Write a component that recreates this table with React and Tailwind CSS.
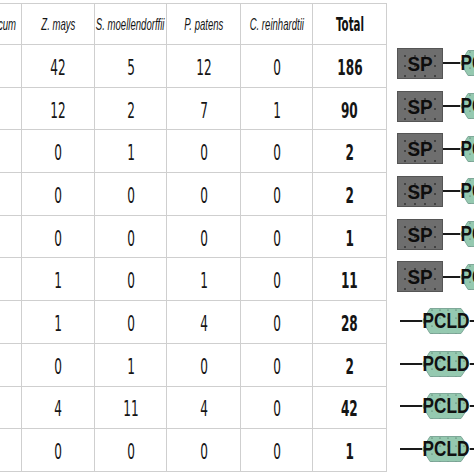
const header = ["S. lycopersicum", "Z. mays", "S. moellendorffii", "P. patens", "C. reinhardtii"];

const rows = [
  [0, 42, 5, 12, 0, 186],
  [0, 12, 2, 7, 1, 90],
  [0, 0, 1, 0, 0, 2],
  [0, 0, 0, 0, 0, 2],
  [0, 0, 0, 0, 0, 1],
  [0, 1, 0, 1, 0, 11],
  [0, 1, 0, 4, 0, 28],
  [0, 0, 1, 0, 0, 2],
  [0, 4, 11, 4, 0, 42],
  [0, 0, 0, 0, 0, 1],
];

const domains = ["sp", "sp", "sp", "sp", "sp", "sp", "pcld", "pcld", "pcld", "pcld"];

const cell = "flex items-center justify-center border-r border-b border-[#cfcfcf]";

const Hexagon = () => (
  <div className="relative w-[48px] h-[26px] shrink-0 flex items-center justify-center">
    <svg className="absolute inset-0" width="48" height="26" viewBox="0 0 48 26">
      <defs>
        <pattern id="dots" width="8" height="8" patternUnits="userSpaceOnUse">
          <circle cx="2" cy="2" r="0.6" fill="#3b5a4a" />
        </pattern>
      </defs>
      <polygon points="0.5,13 8,0.5 39,0.5 47.5,13 39,25.5 8,25.5" fill="#95c9b0" stroke="#7fa899" strokeWidth="1" />
      <polygon points="0.5,13 8,0.5 39,0.5 47.5,13 39,25.5 8,25.5" fill="url(#dots)" />
    </svg>
    <span className="relative shrink-0 font-['Liberation_Sans',sans-serif] font-bold text-[22px] leading-none text-[#111] inline-block scale-x-[0.78]">
      PCLD
    </span>
  </div>
);

const SpBox = () => (
  <div className="w-[46px] h-[31px] shrink-0 flex items-center justify-center bg-[#6e6e6e] border border-[#555] bg-[radial-gradient(#2a2a2a_0.6px,transparent_0.9px)] bg-[length:10px_10px] bg-[position:2px_2px]">
    <span className="shrink-0 font-['Liberation_Sans',sans-serif] font-bold text-[21px] leading-none text-[#0d0d0d] inline-block scale-x-[0.9]">
      SP
    </span>
  </div>
);

export default function App() {
  return (
    <div className="w-[474px] h-[474px] bg-white flex overflow-hidden">
      <div className="w-[387px] shrink-0 overflow-hidden">
        <div className="-ml-[51px] mt-[3px] grid grid-cols-[73px_73px_72px_74px_72px_74px] border-t border-[#cfcfcf]">
          {header.map((h, k) => (
            <div key={h} className={`${cell} h-[41px] ${k === 0 ? "pr-[5px]" : ""}`}>
              <span className="shrink-0 font-['Liberation_Sans',sans-serif] italic text-[16.5px] leading-none text-[#151515] inline-block whitespace-nowrap scale-x-[0.58]">
                {h}
              </span>
            </div>
          ))}
          <div className={`${cell} h-[41px]`}>
            <span className="shrink-0 font-['DejaVu_Sans',sans-serif] font-bold text-[19px] leading-none text-[#111] inline-block scale-x-[0.54]">
              Total
            </span>
          </div>
          {rows.map((r, i) =>
            r.map((v, j) => (
              <div key={`${i}-${j}`} className={`${cell} h-[42.7px] pt-[4px]`}>
                {j > 0 && (
                  <span
                    className={`shrink-0 font-['DejaVu_Sans',sans-serif] text-[22px] leading-none text-[#151515] inline-block scale-x-[0.55] ${
                      j === 5 ? "font-bold" : ""
                    }`}
                  >
                    {v}
                  </span>
                )}
              </div>
            ))
          )}
        </div>
      </div>
      <div className="w-[87px] shrink-0 overflow-hidden">
        <div className="h-[44px]" />
        {domains.map((d, i) =>
          d === "sp" ? (
            <div key={i} className="h-[42.7px] flex items-center pl-[10px] pb-[4px]">
              <SpBox />
              <div className="w-[17px] h-[2px] bg-[#1a1a1a] shrink-0" />
              <Hexagon />
            </div>
          ) : (
            <div key={i} className="h-[42.7px] flex items-center pl-[13px] pb-[1px]">
              <div className="w-[22px] h-[2px] bg-[#1a1a1a] shrink-0" />
              <Hexagon />
              <div className="w-[10px] h-[2px] bg-[#1a1a1a] shrink-0" />
            </div>
          )
        )}
      </div>
    </div>
  );
}
